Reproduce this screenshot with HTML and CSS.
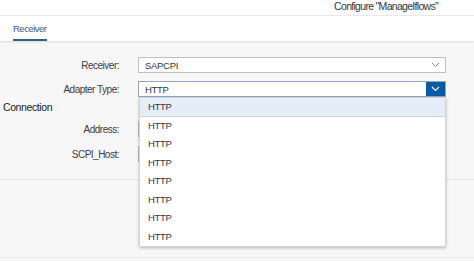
FILE: index.html
```html
<!DOCTYPE html>
<html>
<head>
    <title>Configure "ManageIflows"</title>
    <link rel="stylesheet" href="styles.css">
</head>
<body>
    <header class="title-bar">
        Configure "ManageIflows"
    </header>
    <div class="tab-bar">
        <div class="tab active">Receiver</div>
    </div>
    <div class="form">
        <div class="row">
            <label class="label">Receiver:</label>
            <div class="select">
                <span class="value">SAPCPI</span>
                <span class="arrow">
                    <svg width="9" height="6" viewBox="0 0 9 6"><polyline points="1,1 4.5,4.5 8,1" fill="none" stroke="#8c8c8c" stroke-width="1"/></svg>
                </span>
            </div>
        </div>
        <div class="row">
            <label class="label">Adapter Type:</label>
            <div class="select open">
                <span class="value">HTTP</span>
                <span class="arrow">
                    <svg width="9" height="6" viewBox="0 0 9 6"><polyline points="1,1 4.5,4.5 8,1" fill="none" stroke="#fff" stroke-width="1.2"/></svg>
                </span>
                <ul class="dropdown">
                    <li class="selected">HTTP</li>
                    <li>HTTP</li>
                    <li>HTTP</li>
                    <li>HTTP</li>
                    <li>HTTP</li>
                    <li>HTTP</li>
                    <li>HTTP</li>
                    <li>HTTP</li>
                </ul>
            </div>
        </div>
        <div class="group-title">Connection</div>
        <div class="row">
            <label class="label">Address:</label>
            <div class="input"></div>
        </div>
        <div class="row">
            <label class="label">SCPI_Host:</label>
            <div class="input"></div>
        </div>
    </div>
    <div class="bottom"></div>
</body>
</html>
```

FILE: styles.css
```css
body {
    margin: 0;
    width: 474px;
    height: 261px;
    overflow: hidden;
    background-color: #f7f7f7;
    font-family: "Liberation Sans", Arial, sans-serif;
    font-size: 10px;
    color: #32363a;
}
.title-bar {
    height: 16px;
    line-height: 13px;
    background-color: #fff;
    border-bottom: 1px solid #ebebeb;
    text-align: right;
    padding-right: 36px;
    box-sizing: border-box;
    font-size: 10.5px;
    letter-spacing: -0.7px;
}
.tab-bar {
    height: 25px;
    background-color: #fff;
    box-shadow: 0 1px 2px rgba(0, 0, 0, 0.12);
    padding-left: 13px;
    display: flex;
    position: relative;
}
.tab {
    font-size: 9.5px;
    letter-spacing: -0.5px;
    color: #346187;
    padding-top: 7px;
    box-sizing: border-box;
    height: 25px;
}
.tab.active {
    border-bottom: 2px solid #346187;
}
.form {
    padding-top: 16px;
    height: 139px;
    border-bottom: 1px solid #e6e6e6;
    box-sizing: border-box;
}
.row {
    display: flex;
    align-items: center;
    height: 16px;
    margin-bottom: 8px;
}
.label {
    width: 119px;
    text-align: right;
    margin-right: 19px;
    font-size: 10px;
    letter-spacing: -0.5px;
    color: #3a3e42;
}
.select, .input {
    position: relative;
    width: 308px;
    height: 16px;
    box-sizing: border-box;
    border: 1px solid #bfbfbf;
    background-color: #fff;
    display: flex;
    align-items: center;
}
.value {
    flex: 1;
    padding-left: 6px;
    font-size: 9.5px;
    letter-spacing: -0.3px;
}
.arrow {
    width: 19px;
    height: 14px;
    display: flex;
    align-items: center;
    justify-content: center;
}
.select.open {
    border-color: #8fa7c0;
}
.select.open .arrow {
    background-color: #0b5aa6;
}
.dropdown {
    position: absolute;
    top: 15px;
    left: 0;
    right: -1px;
    margin: 0;
    padding: 0;
    list-style: none;
    background-color: #fff;
    border: 1px solid #d4d4d4;
    box-shadow: 0 1px 3px rgba(0, 0, 0, 0.25);
    z-index: 2;
}
.dropdown li {
    height: 18.5px;
    line-height: 18px;
    padding-left: 8px;
    font-size: 9.5px;
    letter-spacing: -0.3px;
}
.dropdown li.selected {
    background-color: #e5eef8;
    border-bottom: 1px solid #c9d6e4;
    box-sizing: border-box;
}
.group-title {
    margin-top: -6px;
    padding-left: 3px;
    height: 16px;
    line-height: 16px;
    font-size: 10.5px;
    letter-spacing: -0.4px;
    color: #222;
    margin-bottom: 6px;
}
.group-title + .row {
    margin-bottom: 9px;
}
.bottom {
    height: 78px;
    border-bottom: 1px solid #ececec;
    box-sizing: border-box;
}
```
